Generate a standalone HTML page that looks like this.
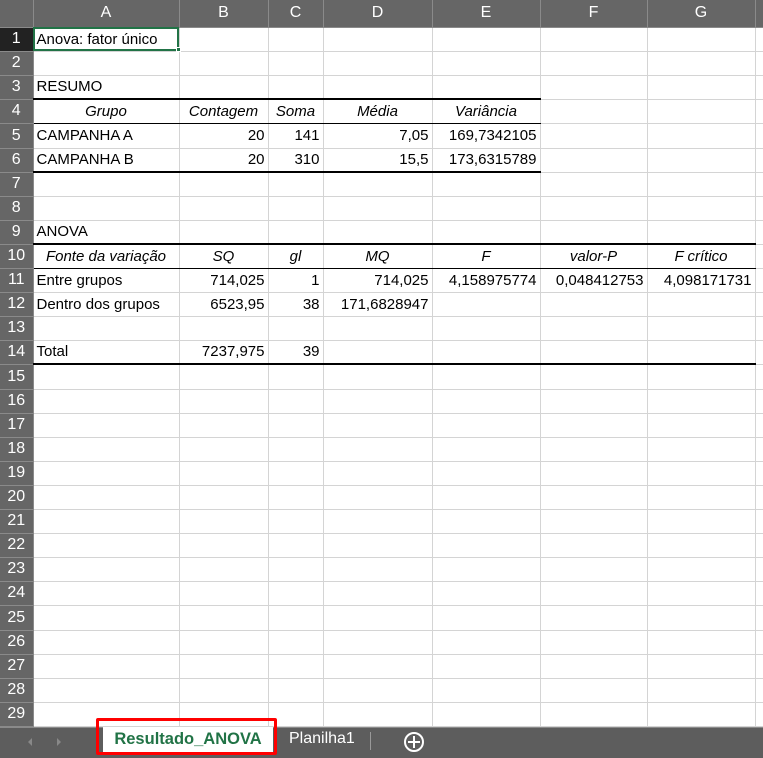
<!DOCTYPE html>
<html><head><meta charset="utf-8"><style>
*{margin:0;padding:0;box-sizing:border-box}
body{width:763px;height:758px;overflow:hidden;background:#fff;font-family:"Liberation Sans",Arial,sans-serif;position:relative}
table{position:absolute;left:0;top:0;border-collapse:collapse;table-layout:fixed;width:875px}
td{border-right:1px solid #d4d4d4;border-bottom:1px solid #d4d4d4;font-size:15px;color:#000;padding:0 3px;white-space:nowrap;overflow:visible;height:24px;vertical-align:middle}
tr.hd td{background:#666;color:#fff;text-align:center;font-size:16px;height:27px;border-right:1px solid #8a8a8a;border-bottom:1px solid #8a8a8a}
td.rh{background:#666;color:#fff;text-align:center;padding:0;font-size:16px;border-bottom:1px solid #8a8a8a;border-right:1px solid #8a8a8a}
td.sel{background:#222}
.r{text-align:right}.c{text-align:center;font-style:italic}
.t{border-bottom:2px solid #000}
.n{border-bottom:1px solid #000}
tr.x td{height:25px}
#tabs{position:absolute;left:0;top:727px;width:763px;height:31px;background:#5d5d5d;border-top:1px solid #8a8a8a}
</style></head><body>
<table>
<colgroup><col style="width:33px"><col style="width:146px"><col style="width:89px"><col style="width:55px"><col style="width:109px"><col style="width:108px"><col style="width:107px"><col style="width:108px"><col style="width:120px"></colgroup>
<tr class="hd"><td></td><td class="sel">A</td><td>B</td><td>C</td><td>D</td><td>E</td><td>F</td><td>G</td><td></td></tr>
<tr><td class="rh sel">1</td><td style="outline:2px solid #217346;outline-offset:-2px">Anova: fator único</td><td></td><td></td><td></td><td></td><td></td><td></td><td></td></tr>
<tr><td class="rh">2</td><td></td><td></td><td></td><td></td><td></td><td></td><td></td><td></td></tr>
<tr><td class="rh">3</td><td class="t">RESUMO</td><td class="t"></td><td class="t"></td><td class="t"></td><td class="t"></td><td></td><td></td><td></td></tr>
<tr><td class="rh">4</td><td class="c n">Grupo</td><td class="c n">Contagem</td><td class="c n">Soma</td><td class="c n">Média</td><td class="c n">Variância</td><td></td><td></td><td></td></tr>
<tr class="x"><td class="rh">5</td><td>CAMPANHA A</td><td class="r">20</td><td class="r">141</td><td class="r">7,05</td><td class="r">169,7342105</td><td></td><td></td><td></td></tr>
<tr><td class="rh">6</td><td class="t">CAMPANHA B</td><td class="r t">20</td><td class="r t">310</td><td class="r t">15,5</td><td class="r t">173,6315789</td><td></td><td></td><td></td></tr>
<tr><td class="rh">7</td><td></td><td></td><td></td><td></td><td></td><td></td><td></td><td></td></tr>
<tr><td class="rh">8</td><td></td><td></td><td></td><td></td><td></td><td></td><td></td><td></td></tr>
<tr><td class="rh">9</td><td class="t">ANOVA</td><td class="t"></td><td class="t"></td><td class="t"></td><td class="t"></td><td class="t"></td><td class="t"></td><td></td></tr>
<tr><td class="rh">10</td><td class="c n">Fonte da variação</td><td class="c n">SQ</td><td class="c n">gl</td><td class="c n">MQ</td><td class="c n">F</td><td class="c n">valor-P</td><td class="c n">F crítico</td><td></td></tr>
<tr><td class="rh">11</td><td>Entre grupos</td><td class="r">714,025</td><td class="r">1</td><td class="r">714,025</td><td class="r">4,158975774</td><td class="r">0,048412753</td><td class="r">4,098171731</td><td></td></tr>
<tr><td class="rh">12</td><td>Dentro dos grupos</td><td class="r">6523,95</td><td class="r">38</td><td class="r">171,6828947</td><td></td><td></td><td></td><td></td></tr>
<tr><td class="rh">13</td><td></td><td></td><td></td><td></td><td></td><td></td><td></td><td></td></tr>
<tr><td class="rh">14</td><td class="t">Total</td><td class="r t">7237,975</td><td class="r t">39</td><td class="t"></td><td class="t"></td><td class="t"></td><td class="t"></td><td></td></tr>
<tr class="x"><td class="rh">15</td><td></td><td></td><td></td><td></td><td></td><td></td><td></td><td></td></tr>
<tr><td class="rh">16</td><td></td><td></td><td></td><td></td><td></td><td></td><td></td><td></td></tr>
<tr><td class="rh">17</td><td></td><td></td><td></td><td></td><td></td><td></td><td></td><td></td></tr>
<tr><td class="rh">18</td><td></td><td></td><td></td><td></td><td></td><td></td><td></td><td></td></tr>
<tr><td class="rh">19</td><td></td><td></td><td></td><td></td><td></td><td></td><td></td><td></td></tr>
<tr><td class="rh">20</td><td></td><td></td><td></td><td></td><td></td><td></td><td></td><td></td></tr>
<tr><td class="rh">21</td><td></td><td></td><td></td><td></td><td></td><td></td><td></td><td></td></tr>
<tr><td class="rh">22</td><td></td><td></td><td></td><td></td><td></td><td></td><td></td><td></td></tr>
<tr><td class="rh">23</td><td></td><td></td><td></td><td></td><td></td><td></td><td></td><td></td></tr>
<tr><td class="rh">24</td><td></td><td></td><td></td><td></td><td></td><td></td><td></td><td></td></tr>
<tr class="x"><td class="rh">25</td><td></td><td></td><td></td><td></td><td></td><td></td><td></td><td></td></tr>
<tr><td class="rh">26</td><td></td><td></td><td></td><td></td><td></td><td></td><td></td><td></td></tr>
<tr><td class="rh">27</td><td></td><td></td><td></td><td></td><td></td><td></td><td></td><td></td></tr>
<tr><td class="rh">28</td><td></td><td></td><td></td><td></td><td></td><td></td><td></td><td></td></tr>
<tr><td class="rh">29</td><td></td><td></td><td></td><td></td><td></td><td></td><td></td><td></td></tr>
</table>
<div style="position:absolute;left:176px;top:47px;width:5px;height:5px;background:#217346;border:1px solid #fff"></div>
<div id="tabs">
<div style="position:absolute;left:28px;top:10px;width:0;height:0;border-top:4px solid transparent;border-bottom:4px solid transparent;border-right:4px solid #888"></div>
<div style="position:absolute;left:57px;top:10px;width:0;height:0;border-top:4px solid transparent;border-bottom:4px solid transparent;border-left:4px solid #888"></div>
<div style="position:absolute;left:103px;top:-1px;width:170px;height:26px;background:#fff;color:#217346;font-weight:bold;font-size:16.5px;text-align:center;line-height:24px">Resultado_ANOVA</div>
<div style="position:absolute;left:96px;top:-10px;width:181px;height:37px;border:3px solid #ff0000;border-radius:2px"></div>
<div style="position:absolute;left:289px;top:2px;color:#fff;font-size:16px">Planilha1</div>
<div style="position:absolute;left:370px;top:4px;width:1px;height:18px;background:#999"></div>
<div style="position:absolute;left:404px;top:4px;width:20px;height:20px;border:2px solid #fff;border-radius:50%"></div>
<div style="position:absolute;left:408px;top:13px;width:12px;height:2px;background:#fff"></div>
<div style="position:absolute;left:413px;top:8px;width:2px;height:12px;background:#fff"></div>
</div>
</body></html>
